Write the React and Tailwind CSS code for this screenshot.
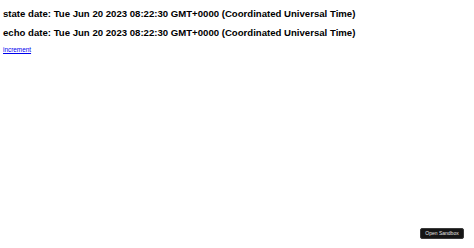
export default function App() {
  const d = "Tue Jun 20 2023 08:22:30 GMT+0000 (Coordinated Universal Time)";
  return (
    <div className="relative h-[248px] w-full bg-white px-[3px] pt-[8px] font-['Liberation_Sans',Arial,sans-serif] text-black">
      <h2 className="text-[9.6px] font-bold leading-[11px]">state date: {d}</h2>
      <h2 className="mt-[8px] text-[9.6px] font-bold leading-[11px]">echo date: {d}</h2>
      <a href="#" className="mt-[8px] block w-fit text-[6.4px] leading-[7px] text-[#0000ee] underline">
        increment
      </a>
      <button className="absolute bottom-[9px] right-[10px] flex h-[11px] w-[44px] items-center justify-center rounded-[2px] border border-[#3a3a3a] bg-[#151515] text-[5px] leading-none text-[#e5e5e5]">
        Open Sandbox
      </button>
    </div>
  );
}
